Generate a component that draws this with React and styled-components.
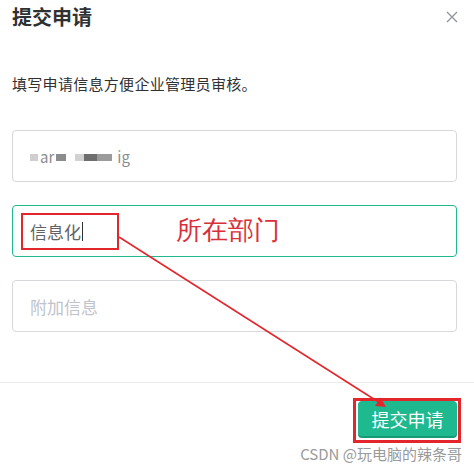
import React from "react";
import styled, { createGlobalStyle } from "styled-components";

const GlobalStyle = createGlobalStyle`
  html, body {
    margin: 0;
    padding: 0;
    background: #fff;
  }
  body {
    font-family: "Noto Sans CJK SC", "Noto Sans", sans-serif;
  }
`;

const GREEN = "#1fb98f";
const RED = "#e3262c";

const Dialog = styled.div`
  position: relative;
  width: 474px;
  height: 470px;
  background: #fff;
  overflow: hidden;
`;

const Header = styled.div`
  display: flex;
  justify-content: space-between;
  align-items: flex-start;
  padding: 5px 15px 0 12px;
`;

const Title = styled.h2`
  margin: 0;
  font-size: 20px;
  line-height: 24px;
  font-weight: 700;
  color: #303133;
`;

const Close = styled.button`
  margin-top: 5px;
  padding: 0;
  width: 14px;
  height: 14px;
  border: none;
  background: none;
  display: flex;
  align-items: center;
  justify-content: center;
  color: #909399;
`;

const Body = styled.div`
  padding: 45px 17px 0 12px;
`;

const Desc = styled.p`
  margin: 0;
  font-size: 15px;
  line-height: 20px;
  letter-spacing: 0.3px;
  color: #303133;
`;

const Form = styled.div`
  display: flex;
  flex-direction: column;
  gap: 23px;
  margin-top: 36px;
`;

const Field = styled.div`
  height: 52px;
  box-sizing: border-box;
  border: 1px solid ${(p) => (p.$focused ? GREEN : "#d6d8dc")};
  border-radius: 4px;
  padding: 0 17px;
  display: flex;
  align-items: center;
  font-size: 17px;
  color: ${(p) => (p.$placeholder ? "#c0c4cc" : "#606266")};
`;

const Caret = styled.span`
  display: inline-block;
  width: 1px;
  height: 19px;
  background: #303133;
  margin-left: 1px;
`;

const Mosaic = styled.span`
  display: inline-block;
  height: 7px;
  width: ${(p) => p.$w}px;
  background: ${(p) => p.$c};
  margin-top: 3px;
`;

const Blur = styled.span`
  font-size: 15px;
  color: #8a8c90;
  margin: 0 ${(p) => p.$m || 0}px;
`;

const NameLine = styled.span`
  display: flex;
  align-items: center;
`;

const Footer = styled.div`
  margin-top: 50px;
  border-top: 1px solid #e9eaec;
  padding: 18px 17px 0 0;
  display: flex;
  justify-content: flex-end;
`;

const SubmitButton = styled.button`
  width: 99px;
  height: 35px;
  border: none;
  border-radius: 4px;
  background: ${GREEN};
  color: #fff;
  font-family: inherit;
  font-size: 18px;
  padding: 0;
  box-shadow: 0 2px 0 #189a77;
`;

const Watermark = styled.div`
  position: absolute;
  right: 12px;
  bottom: 7px;
  font-size: 15px;
  line-height: 18px;
  color: #9a9a9a;
`;

/* annotation overlay drawn on top of the screenshot */
const MarkBox = styled.div`
  position: absolute;
  box-sizing: border-box;
  border: ${(p) => p.$t}px solid ${RED};
  left: ${(p) => p.$x}px;
  top: ${(p) => p.$y}px;
  width: ${(p) => p.$w}px;
  height: ${(p) => p.$h}px;
`;

const MarkText = styled.div`
  position: absolute;
  left: 176px;
  top: 213px;
  font-family: serif;
  font-weight: 300;
  font-size: 26px;
  line-height: 36px;
  color: #d8303a;
`;

const Arrow = styled.svg`
  position: absolute;
  left: 0;
  top: 0;
  pointer-events: none;
`;

export default function App() {
  return (
    <>
      <GlobalStyle />
      <Dialog>
        <Header>
          <Title>提交申请</Title>
          <Close aria-label="close">
            <svg width="12" height="12" viewBox="0 0 12 12">
              <path d="M1 1L11 11M11 1L1 11" stroke="currentColor" strokeWidth="1.3" />
            </svg>
          </Close>
        </Header>
        <Body>
          <Desc>填写申请信息方便企业管理员审核。</Desc>
          <Form>
            <Field>
              <NameLine>
                <Mosaic $w={8} $c="#cfcfcf" />
                <Blur $m={2}>ar</Blur>
                <Mosaic $w={10} $c="#8c8c8c" />
                <Mosaic $w={9} $c="#fff" />
                <Mosaic $w={9} $c="#d2d2d2" />
                <Mosaic $w={13} $c="#6e6e6e" />
                <Mosaic $w={15} $c="#9b9b9b" />
                <Blur $m={5}>ig</Blur>
              </NameLine>
            </Field>
            <Field $focused>
              信息化
              <Caret />
            </Field>
            <Field $placeholder>附加信息</Field>
          </Form>
        </Body>
        <Footer>
          <SubmitButton>提交申请</SubmitButton>
        </Footer>
        <Watermark>CSDN @玩电脑的辣条哥</Watermark>

        <MarkBox $t={2} $x={21} $y={213} $w={98} $h={37} />
        <MarkText>所在部门</MarkText>
        <MarkBox $t={3} $x={353} $y={398} $w={108} $h={45} />
        <Arrow width="474" height="470" viewBox="0 0 474 470">
          <line x1="119" y1="237" x2="380" y2="403" stroke={RED} strokeWidth="1.5" />
          <polygon points="386,407 375,406 380.5,397.5" fill={RED} />
        </Arrow>
      </Dialog>
    </>
  );
}
